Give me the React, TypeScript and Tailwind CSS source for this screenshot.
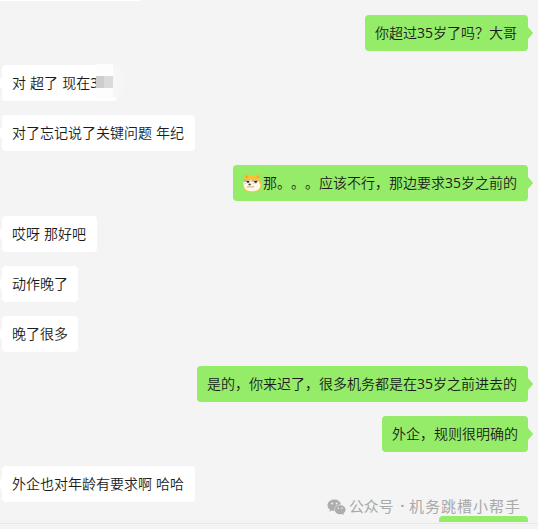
import { Fragment } from 'react';
import clsx from 'clsx';

type Message = {
  text: string;
  mine?: boolean;
  emoji?: boolean;
  masked?: boolean;
  width: string;
};

const messages: Message[] = [
  { text: '你超过35岁了吗？大哥', mine: true, width: 'w-[163px]' },
  { text: '对 超了 现在3', masked: true, width: 'w-[115px]' },
  { text: '对了忘记说了关键问题 年纪', width: 'w-[193px]' },
  {
    text: '那。。。应该不行，那边要求35岁之前的',
    mine: true,
    emoji: true,
    width: 'w-[295px] mb-px',
  },
  { text: '哎呀 那好吧', width: 'w-[95px]' },
  { text: '动作晚了', width: 'w-[76px]' },
  { text: '晚了很多', width: 'w-[76px]' },
  {
    text: '是的，你来迟了，很多机务都是在35岁之前进去的',
    mine: true,
    width: 'w-[331px]',
  },
  { text: '外企，规则很明确的', mine: true, width: 'w-[146px]' },
  { text: '外企也对年龄有要求啊 哈哈', width: 'w-[193px]' },
];

const DogeIcon = () => (
  <svg viewBox="0 0 20 20" className="mr-px -ml-px size-5 shrink-0">
    <path
      d="M3.200.8C4.900 1.200 6.400 2.200 7.300 3.300c1.900-.4 4.400-.4 6.200.1.900-1.300 2-2.200 3.500-2.700.9 2 1.300 4.300 1.100 6.300 1.300 2 1.600 5.500.7 7.700-1.300 3-4.700 4.600-8.500 4.600S3 17.800 1.700 14.800c-.8-2-.5-5.100.8-7.300C2.200 5.100 2.600 2.600 3.200.8Z"
      fill="#fbc230"
    />
    <path d="M3.900 2c1 .5 1.700 1.100 2.100 1.800L3.700 5.600Z" fill="#f39a45" />
    <path d="M16.400 1.900c-.8.500-1.400 1.100-1.800 1.800l2.400 1.800Z" fill="#f39a45" />
    <path
      d="M1.700 8c2-1 4.300-1.100 6.500-.6 2.700-.7 6.300-.6 8.600 0 .2 2.300.8 3 1.600 4.200.1 2.300-.8 4.200-2.600 5.300-3 1.700-8.600 1.700-11.400 0C1.700 15.200 1.100 10.900 1.700 8Z"
      fill="#fff8ea"
    />
    <path
      d="M1.800 8h5.700M9.700 8h6.600"
      stroke="#8a6a30"
      strokeWidth=".9"
      fill="none"
    />
    <path d="M4.600 8h2.700c0 1.300-.5 2-1.300 2s-1.400-.7-1.400-2Z" fill="#2f2a26" />
    <path d="M12.200 8h2.900c0 1.300-.6 2-1.400 2s-1.500-.7-1.500-2Z" fill="#2f2a26" />
    <path
      d="M2.300 10.300h3M10.600 10.400h4.300"
      stroke="#d7c4a0"
      strokeWidth=".6"
      fill="none"
    />
    <ellipse cx="7.600" cy="11.400" rx="1.200" ry=".9" fill="#4a3a2c" />
    <path
      d="M4.800 13.900c1.300.6 2.300.3 2.800-.7 1 1 2.700 1 4.300.2"
      stroke="#b98b50"
      strokeWidth=".8"
      fill="none"
    />
  </svg>
);

const WechatIcon = () => (
  <svg viewBox="0 0 19 16" className="h-4 w-[19px]">
    <path
      d="M7.300.5C3.500.5.500 3 .500 6.200c0 1.800 1 3.400 2.500 4.500l-.6 2 2.300-1.200c.8.200 1.700.4 2.600.4C7 8.200 9.700 5.500 14 5.500 13.500 2.600 10.700.5 7.300.5Z"
      fill="#adadad"
    />
    <path
      d="M13.200 6.200c-3.200 0-5.500 2-5.500 4.500s2.400 4.500 5.500 4.500c.7 0 1.300-.1 1.900-.3l1.900 1-.5-1.700c1.300-.8 2.100-2.100 2.100-3.500 0-2.500-2.300-4.500-5.400-4.500Z"
      fill="#adadad"
    />
    <g fill="#f3f3f3">
      <circle cx="5" cy="4.500" r=".9" />
      <circle cx="9.600" cy="4.500" r=".9" />
      <circle cx="11.400" cy="9.300" r=".75" />
      <circle cx="15" cy="9.300" r=".75" />
    </g>
  </svg>
);

// Digits use the latin font, everything else the CJK one
const MessageText = ({ text }: { text: string }) => (
  <span className="mb-0.5 whitespace-pre [text-spacing-trim:space-all]">
    {text.split(/(\d+)/).map((part, index) => (
      <Fragment key={index}>
        {/^\d+$/.test(part) ? (
          <span className="font-['Open_Sans',sans-serif] font-normal">
            {part}
          </span>
        ) : (
          part
        )}
      </Fragment>
    ))}
  </span>
);

const Mosaic = () => (
  <div className="absolute -top-px left-[94px] h-[34px] w-[29px] rounded-r-[14px] bg-linear-to-r from-[#fafafa] to-[#f5f5f5]">
    <div className="h-full w-[17px] bg-[#fdfdfd] pt-3">
      <div className="flex h-3">
        <div className="w-2 bg-[#cdcdcd]" />
        <div className="w-[9px] bg-[#dadada]" />
      </div>
    </div>
  </div>
);

const Bubble = ({ text, mine, emoji, masked, width }: Message) => (
  <div
    className={clsx(
      'relative flex h-9 shrink-0 items-center rounded-[4px] px-2.5',
      width,
      mine ? 'mr-2.5 self-end bg-[#95ec69]' : 'ml-0.5 bg-white',
    )}
  >
    {emoji && <DogeIcon />}
    <MessageText text={text} />
    {masked && <Mosaic />}
    <svg
      viewBox="0 0 5 12"
      className={clsx(
        'absolute top-3 h-3 w-[5px]',
        mine
          ? '-right-[5px] fill-[#95ec69]'
          : '-left-[5px] -scale-x-100 fill-white',
      )}
    >
      <path d="M0 0 4.600 5.200Q5.200 6 4.600 6.800L0 12Z" />
    </svg>
  </div>
);

const App = () => {
  return (
    <main className="relative h-[529px] w-[538px] overflow-hidden bg-[#f4f4f4] font-['Noto_Sans_CJK_SC',sans-serif] text-sm font-[350] text-[#1c1c1c]">
      <div className="h-px w-[141px] bg-white" />
      <div className="flex flex-col gap-3.5 pt-3.5 [word-spacing:1px]">
        {messages.map((message, index) => (
          <Bubble key={index} {...message} />
        ))}
        <div className="mr-2.5 h-1.5 w-[89px] self-end rounded-t-[4px] bg-[#95ec69]" />
      </div>
      <div className="mt-px h-px bg-[#e7e7e7]" />

      <div className="absolute top-[495px] left-[327px] flex h-[23px] items-center text-[15px] font-normal whitespace-nowrap text-[#a9a9a9]">
        <WechatIcon />
        <span className="mb-0.5 ml-[3px] w-[46px] tracking-[-0.2px]">
          公众号
        </span>
        <span className="mb-0.5 w-[14px] pl-px text-center font-['Open_Sans',sans-serif] font-bold">
          ·
        </span>
        <span className="mb-0.5 tracking-[1px]">机务跳槽小帮手</span>
      </div>
    </main>
  );
};

export default App;
